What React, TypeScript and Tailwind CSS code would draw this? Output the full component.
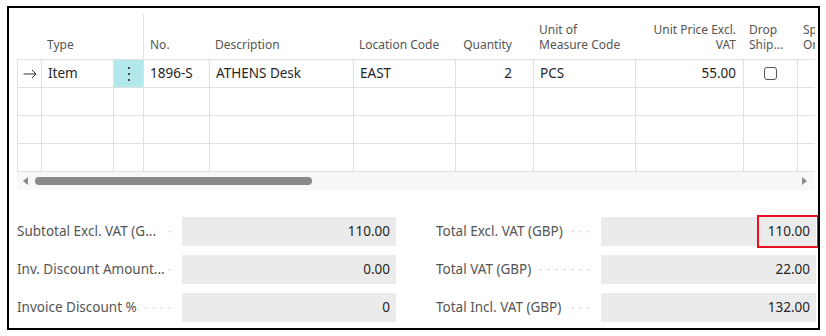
import React from 'react';

const font = { fontFamily: '"Noto Sans", "Open Sans", sans-serif' };

interface Col {
  key: string;
  width: number;
  head: string[];
  align?: 'right' | 'center';
  pr?: string;
}

const cols: Col[] = [
  { key: 'sel', width: 24, head: [] },
  { key: 'type', width: 72, head: ['Type'] },
  { key: 'menu', width: 30, head: [] },
  { key: 'no', width: 66, head: ['No.'] },
  { key: 'desc', width: 144, head: ['Description'] },
  { key: 'loc', width: 102, head: ['Location Code'] },
  { key: 'qty', width: 78, head: ['Quantity'], align: 'right', pr: 'pr-[21px]' },
  { key: 'uom', width: 102, head: ['Unit of', 'Measure Code'] },
  { key: 'price', width: 108, head: ['Unit Price Excl.', 'VAT'], align: 'right', pr: 'pr-[7px]' },
  { key: 'drop', width: 54, head: ['Drop', 'Ship...'] },
  { key: 'spec', width: 60, head: ['Sp', 'Or'] },
];

const line: Record<string, React.ReactNode> = {
  sel: (
    <svg width="14" height="10" viewBox="0 0 14 10" fill="none" stroke="#333" strokeWidth="1">
      <path d="M0.5 5H13M9 1l4 4-4 4" />
    </svg>
  ),
  type: 'Item',
  menu: (
    <svg width="4" height="16" viewBox="0 0 4 16" fill="#4a4a4a">
      <rect x="1" y="1" width="2" height="2" />
      <rect x="1" y="7" width="2" height="2" />
      <rect x="1" y="13" width="2" height="2" />
    </svg>
  ),
  no: '1896-S',
  desc: 'ATHENS Desk',
  loc: 'EAST',
  qty: '2',
  uom: 'PCS',
  price: '55.00',
  drop: <span className="block w-[13px] h-[13px] rounded-[3px] border border-[#555] mx-auto" />,
  spec: '',
};

function HeaderRow() {
  return (
    <div className="flex h-[46px] border-b border-[#e0e0e0]">
      {cols.map(c => (
        <div
          key={c.key}
          style={{ width: c.width }}
          className={`shrink-0 flex flex-col justify-end pb-[7px] text-[12px] leading-[15px] text-[#555] ${
            c.key === 'no' ? 'border-l border-[#e0e0e0]' : ''
          } ${c.align === 'right' ? `items-end ${c.pr}` : 'pl-[6px]'}`}
        >
          {c.head.map(h => (
            <span key={h} className="whitespace-nowrap">{h}</span>
          ))}
        </div>
      ))}
    </div>
  );
}

function BodyRow({ data }: { data?: Record<string, React.ReactNode> }) {
  const centered = (k: string) => k === 'sel' || k === 'menu' || k === 'drop';
  return (
    <div className="flex h-[28px] border-b border-[#e0e0e0]">
      {cols.map(c => (
        <div
          key={c.key}
          style={{ width: c.width }}
          className={`shrink-0 flex items-center border-l border-[#e0e0e0] text-[13.5px] text-[#262626] whitespace-nowrap ${
            c.key === 'menu' && data ? 'bg-[#b3e8ed]' : ''
          } ${
            c.align === 'right' ? `justify-end ${c.pr}` : centered(c.key) ? 'justify-center' : 'pl-[6px]'
          }`}
        >
          {data ? data[c.key] : null}
        </div>
      ))}
    </div>
  );
}

function Scrollbar() {
  return (
    <div className="flex items-center h-[18px] bg-[#f8f8f8] w-[798px]">
      <div className="w-0 h-0 ml-[6px] border-y-[4px] border-y-transparent border-r-[5px] border-r-[#8a8a8a]" />
      <div className="ml-[7px] w-[277px] h-[8px] rounded-full bg-[#8a8a8a]" />
      <div className="flex-1" />
      <div className="w-0 h-0 mr-[8px] border-y-[4px] border-y-transparent border-l-[5px] border-l-[#8a8a8a]" />
    </div>
  );
}

function Field({ label, dots, value, boxW, highlight }: {
  label: string; dots: number; value: string; boxW: number; highlight?: boolean;
}) {
  return (
    <div className="flex items-center h-[29px]">
      <div className="w-[165px] shrink-0 flex items-center justify-between pr-[11px] text-[13.5px] text-[#555]">
        <span className="whitespace-nowrap">{label}</span>
        <span className="whitespace-nowrap text-[#bdbdbd] text-[11px] tracking-[5px] -mr-[5px]">{'·'.repeat(dots)}</span>
      </div>
      <div
        style={{ width: boxW }}
        className="shrink-0 h-full bg-[#ebebeb] flex items-center justify-end pr-[6px] text-[13.5px] text-[#262626] relative"
      >
        {value}
        {highlight && (
          <div className="absolute right-[-3px] top-[-2px] w-[62px] h-[33px] border-2 border-[#e81123]" />
        )}
      </div>
    </div>
  );
}

export default function App() {
  return (
    <div className="w-[826px] h-[336px] bg-white pt-[6px] pl-[7px]" style={font}>
      <div className="w-[813px] h-[324px] border-2 border-black overflow-hidden pl-[8px] pt-[6px]">
        <div className="w-[798px] overflow-hidden">
          <div className="w-[900px]">
            <HeaderRow />
            <BodyRow data={line} />
            <BodyRow />
            <BodyRow />
            <BodyRow />
          </div>
        </div>
        <Scrollbar />
        <div className="flex gap-[40px] mt-[27px]">
          <div className="flex flex-col gap-[9px]">
            <Field label="Subtotal Excl. VAT (G..." dots={1} value="110.00" boxW={214} />
            <Field label="Inv. Discount Amount..." dots={1} value="0.00" boxW={214} />
            <Field label="Invoice Discount %" dots={4} value="0" boxW={214} />
          </div>
          <div className="flex flex-col gap-[9px]">
            <Field label="Total Excl. VAT (GBP)" dots={3} value="110.00" boxW={215} highlight />
            <Field label="Total VAT (GBP)" dots={7} value="22.00" boxW={215} />
            <Field label="Total Incl. VAT (GBP)" dots={3} value="132.00" boxW={215} />
          </div>
        </div>
      </div>
    </div>
  );
}
